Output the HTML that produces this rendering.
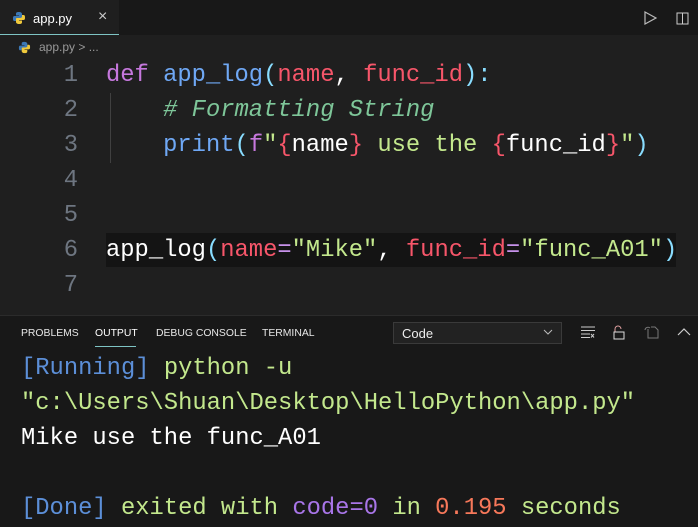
<!DOCTYPE html><html><head><style>
body{margin:0;width:698px;height:526px;background:#1f1f1f;overflow:hidden;position:relative;font-family:"Liberation Sans",sans-serif}
.abs{position:absolute}
.mono{font-family:"Liberation Mono",monospace;white-space:pre}
.code{font-size:23.8px;line-height:35px}
.ln{color:#6e7681;text-align:right;width:78px;left:0}
.k{color:#c678dd}.f{color:#6fa8f5}.p{color:#f7566a}.c{color:#7ec699;font-style:italic}.s{color:#c3e88d}.b{color:#89ddff}.w{color:#fff}.o{color:#c792ea}
.out{font-size:23.8px;line-height:35px}
.pt{font-size:10.4px;top:328px}
</style></head><body>
<div class="abs" style="left:0;top:0;width:698px;height:35px;background:#181818"></div>
<div class="abs" style="left:0;top:0;width:119px;height:35px;background:#1f1f1f;border-bottom:1px solid #7ec4c4;box-sizing:border-box"></div>
<svg class="abs" style="left:12px;top:11px" width="14" height="14" viewBox="0 0 14 14"><path d="M7 1C4 1 4 2 4 3v1.5h3V5H2.5C1 5 1 6.5 1 7.5S1 10 2.5 10H4V8.5C4 7.5 5 7 6 7h3c1 0 1-.5 1-1V3C10 2 9 1 7 1z" fill="#3c78b5"/><path d="M7 13c3 0 3-1 3-2V9.5H7V9h4.5c1.5 0 1.5-1.5 1.5-2.5S13 4 11.5 4H10v1.5C10 6.5 9 7 8 7H5c-1 0-1 .5-1 1v3c0 1 1 2 3 2z" fill="#f0c93c"/></svg>
<div class="abs" style="left:33px;top:11px;font-size:13px;color:#fff">app.py</div>
<div class="abs" style="left:98px;top:8px;font-size:16px;color:#ccc">×</div>
<svg class="abs" style="left:18px;top:41px" width="13" height="13" viewBox="0 0 14 14"><path d="M7 1C4 1 4 2 4 3v1.5h3V5H2.5C1 5 1 6.5 1 7.5S1 10 2.5 10H4V8.5C4 7.5 5 7 6 7h3c1 0 1-.5 1-1V3C10 2 9 1 7 1z" fill="#3c78b5"/><path d="M7 13c3 0 3-1 3-2V9.5H7V9h4.5c1.5 0 1.5-1.5 1.5-2.5S13 4 11.5 4H10v1.5C10 6.5 9 7 8 7H5c-1 0-1 .5-1 1v3c0 1 1 2 3 2z" fill="#f0c93c"/></svg>
<div class="abs" style="left:39px;top:40px;font-size:12px;color:#999">app.py &gt; ...</div>
<svg class="abs" style="left:643px;top:11px" width="14" height="14"><path d="M2 1L13 7L2 13Z" fill="none" stroke="#bbb" stroke-width="1.2"/></svg>
<svg class="abs" style="left:676px;top:12px" width="14" height="14"><rect x="1" y="1" width="11" height="11" fill="none" stroke="#ccc"/><line x1="6.5" y1="1" x2="6.5" y2="12" stroke="#ccc"/></svg>
<div class="abs" style="left:106px;top:233px;width:570px;height:34px;background:#141414"></div>
<div class="abs" style="left:110px;top:93px;width:1px;height:70px;background:#404040"></div>
<div class="abs mono code ln" style="top:58px">1
2
3
4
5
6
7</div>
<div class="abs mono code" style="left:106px;top:58px"><span class="k">def</span> <span class="f">app_log</span><span class="b">(</span><span class="p">name</span><span class="w">,</span> <span class="p">func_id</span><span class="b">):</span>
    <span class="c"># Formatting String</span>
    <span class="f">print</span><span class="b">(</span><span class="k">f</span><span class="s">"</span><span class="p">{</span><span class="w">name</span><span class="p">}</span><span class="s"> use the </span><span class="p">{</span><span class="w">func_id</span><span class="p">}</span><span class="s">"</span><span class="b">)</span>


<span class="w">app_log</span><span class="b">(</span><span class="p">name</span><span class="o">=</span><span class="s">"Mike"</span><span class="w">,</span> <span class="p">func_id</span><span class="o">=</span><span class="s">"func_A01"</span><span class="b">)</span>
</div>
<div class="abs" style="left:0;top:315px;width:698px;height:211px;background:#181818;border-top:1px solid #2b2b2b"></div>
<div class="abs pt" style="left:21px;color:#e7e7e7">PROBLEMS</div>
<div class="abs pt" style="left:95px;color:#fff">OUTPUT</div>
<div class="abs" style="left:95px;top:346px;width:41px;height:1px;background:#7ec4c4"></div>
<div class="abs pt" style="left:156px;color:#e7e7e7">DEBUG CONSOLE</div>
<div class="abs pt" style="left:262px;color:#e7e7e7">TERMINAL</div>
<div class="abs" style="left:393px;top:322px;width:169px;height:22px;background:#222;border:1px solid #3a3a3a;box-sizing:border-box"></div>
<div class="abs" style="left:402px;top:326px;font-size:13px;color:#eee">Code</div>
<svg class="abs" style="left:543px;top:329px" width="10" height="7"><path d="M1 1L5 5L9 1" fill="none" stroke="#bbb"/></svg>
<svg class="abs" style="left:580px;top:325px" width="16" height="14"><path d="M1 2H15M1 5.5H15M1 9H10M1 12.5H10" stroke="#ccc"/><path d="M11 9L14 12.5M14 9L11 12.5" stroke="#ccc"/></svg>
<svg class="abs" style="left:612px;top:324px" width="14" height="16"><path d="M3 8V5a3 3 0 0 1 6 0" fill="none" stroke="#e0a0a0"/><rect x="2" y="8" width="10" height="7" fill="none" stroke="#ddd"/></svg>
<svg class="abs" style="left:643px;top:324px" width="16" height="16"><path d="M5 5V14H15V6L12 3H8" fill="none" stroke="#777"/><path d="M2 6a3 3 0 0 1 5-2" fill="none" stroke="#777"/></svg>
<svg class="abs" style="left:677px;top:327px" width="14" height="9"><path d="M1 8L7 2L13 8" fill="none" stroke="#ccc" stroke-width="1.2"/></svg>
<div class="abs mono out" style="left:21px;top:351px"><span style="color:#5c8fd8">[Running]</span> <span class="s">python -u</span>
<span class="s">"c:\Users\Shuan\Desktop\HelloPython\app.py"</span>
<span class="w">Mike use the func_A01</span>

<span style="color:#5c8fd8">[Done]</span> <span class="s">exited with</span> <span style="color:#a875e8">code=0</span> <span class="s">in</span> <span style="color:#f7785a">0.195</span> <span class="s">seconds</span></div>
</body></html>
